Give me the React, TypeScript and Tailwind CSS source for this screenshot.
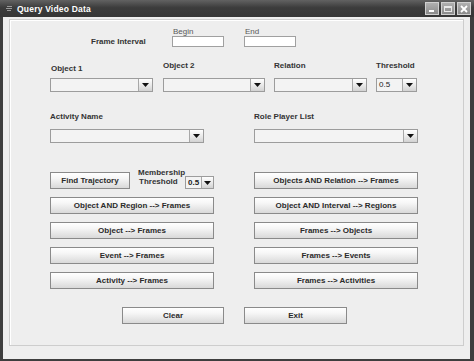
import React from "react";

function Arrow() {
  return (
    <div className="w-[14px] h-full border-l border-[#a8a8a8] bg-[linear-gradient(to_bottom,#ffffff,#e6e6e6_60%,#d2d2d2)] flex items-center justify-center">
      <svg width="7" height="4" viewBox="0 0 7 4">
        <path d="M0 0 H7 L3.5 4 Z" fill="#111" />
      </svg>
    </div>
  );
}

function Combo({ w, value, bold }: { w: string; value?: string; bold?: boolean }) {
  return (
    <div className={`${w} h-[14px] flex border border-[#9c9c9c] bg-[#f3f3f3] shrink-0`}>
      <div className={`flex-1 flex items-center pl-[2px] text-[8px] leading-[8px] text-[#222] ${bold ? "font-bold" : ""}`}>
        {value}
      </div>
      <Arrow />
    </div>
  );
}

function Btn({ w, children }: { w: string; children: React.ReactNode }) {
  return (
    <div
      className={`${w} h-[17px] shrink-0 border border-[#8a8a8a] bg-[linear-gradient(to_bottom,#ffffff,#f6f6f6_35%,#d9d9d9)] flex items-center justify-center text-[8px] leading-[8px] font-bold text-[#2a2a2a]`}
    >
      {children}
    </div>
  );
}

function Label({ children, className = "" }: { children: React.ReactNode; className?: string }) {
  return <div className={`text-[8px] leading-[10px] font-bold text-[#333] whitespace-nowrap ${className}`}>{children}</div>;
}

export default function App() {
  return (
    <div className="w-[474px] h-[361px] bg-[#3e3e3e] flex flex-col overflow-hidden font-['Liberation_Sans',Arial,sans-serif]">
      {/* title bar */}
      <div className="h-[17px] shrink-0 flex items-center bg-[linear-gradient(to_bottom,#626262,#3c3c3c_45%,#363636)]">
        <div className="w-[17px] flex flex-col items-center justify-center gap-[1px] pl-[1px]">
          <div className="w-[5px] h-[1px] bg-[#9a9a9a]" />
          <div className="w-[6px] h-[1px] bg-[#9a9a9a]" />
          <div className="w-[4px] h-[1px] bg-[#9a9a9a]" />
        </div>
        <div className="text-white font-bold text-[8.5px] leading-[10px] tracking-[0.2px]">Query Video Data</div>
        <div className="ml-auto flex gap-[2px] pr-[3px]">
          <div className="w-[14px] h-[13px] border border-[#cfcfcf] bg-[linear-gradient(to_bottom,#b0b0b0,#8a8a8a)] relative">
            <div className="absolute left-[3px] bottom-[2px] w-[5px] h-[2px] bg-white" />
          </div>
          <div className="w-[14px] h-[13px] border border-[#cfcfcf] bg-[linear-gradient(to_bottom,#b0b0b0,#8a8a8a)] flex items-center justify-center">
            <div className="w-[8px] h-[6px] border border-[#e8e8e8] border-t-2" />
          </div>
          <div className="w-[14px] h-[13px] border border-[#cfcfcf] bg-[linear-gradient(to_bottom,#b0b0b0,#8a8a8a)] flex items-center justify-center">
            <svg width="8" height="8" viewBox="0 0 8 8">
              <path d="M1 1 L7 7 M7 1 L1 7" stroke="white" strokeWidth="1.8" />
            </svg>
          </div>
        </div>
      </div>

      {/* body */}
      <div className="ml-[3px] mr-[4px] h-[342px] bg-[#eeeeee] pt-[2px] px-[6px] pb-[13px] flex">
        <div className="flex-1 border border-[#cdcdcd] shadow-[inset_1px_1px_0_#ffffff] flex flex-col">
          {/* frame interval */}
          <div className="flex items-end mt-[8px] h-[19px]">
            <Label className="ml-[81px] w-[81px]">Frame Interval</Label>
            <div className="w-[72px] flex flex-col">
              <div className="text-[8px] leading-[8px] text-[#5a5a5a] pl-[1px]">Begin</div>
              <div className="w-[52px] h-[11px] bg-white border border-[#a0a0a0]" />
            </div>
            <div className="flex flex-col">
              <div className="text-[8px] leading-[8px] text-[#5a5a5a] pl-[1px]">End</div>
              <div className="w-[52px] h-[11px] bg-white border border-[#a0a0a0]" />
            </div>
          </div>

          {/* objects row */}
          <div className="flex mt-[14px] ml-[40px]">
            <div className="w-[113px] flex flex-col">
              <div className="h-[17px] pt-[3px]"><Label className="pl-[1px]">Object 1</Label></div>
              <Combo w="w-[103px]" />
            </div>
            <div className="w-[111px] flex flex-col">
              <div className="h-[17px]"><Label>Object 2</Label></div>
              <Combo w="w-[102px]" />
            </div>
            <div className="w-[102px] flex flex-col">
              <div className="h-[17px]"><Label>Relation</Label></div>
              <Combo w="w-[93px]" />
            </div>
            <div className="flex flex-col">
              <div className="h-[17px]"><Label>Threshold</Label></div>
              <Combo w="w-[41px]" value="0.5" />
            </div>
          </div>

          {/* activity row */}
          <div className="flex mt-[20px] ml-[40px]">
            <div className="w-[204px] flex flex-col">
              <div className="h-[17px]"><Label>Activity Name</Label></div>
              <Combo w="w-[154px]" />
            </div>
            <div className="flex flex-col">
              <div className="h-[17px]"><Label>Role Player List</Label></div>
              <Combo w="w-[164px]" />
            </div>
          </div>

          {/* buttons */}
          <div className="flex mt-[29px] ml-[40px] gap-[40px]">
            <div className="w-[164px] flex flex-col gap-[8px]">
              <div className="h-[17px] flex relative">
                <Btn w="w-[80px]">Find Trajectory</Btn>
                <div className="ml-[8px] -mt-[4px] flex flex-col">
                  <div className="text-[8px] leading-[9px] font-bold text-[#333]">Membership</div>
                  <div className="text-[8px] leading-[9px] font-bold text-[#333] pl-[1px]">Threshold</div>
                </div>
                <div className="absolute left-[135px] top-[4px]">
                  <div className="w-[29px] h-[13px] flex border border-[#9c9c9c] bg-[#f3f3f3]">
                    <div className="flex-1 flex items-center pl-[2px] text-[8px] leading-[8px] font-bold text-[#222]">0.5</div>
                    <div className="w-[12px] h-full border-l border-[#a8a8a8] bg-[linear-gradient(to_bottom,#ffffff,#e6e6e6_60%,#d2d2d2)] flex items-center justify-center">
                      <svg width="7" height="4" viewBox="0 0 7 4">
                        <path d="M0 0 H7 L3.5 4 Z" fill="#111" />
                      </svg>
                    </div>
                  </div>
                </div>
              </div>
              <Btn w="w-[164px]">Object AND Region --&gt; Frames</Btn>
              <Btn w="w-[164px]">Object --&gt; Frames</Btn>
              <Btn w="w-[164px]">Event --&gt; Frames</Btn>
              <Btn w="w-[164px]">Activity --&gt; Frames</Btn>
            </div>
            <div className="w-[164px] flex flex-col gap-[8px]">
              <Btn w="w-[164px]">Objects AND Relation --&gt; Frames</Btn>
              <Btn w="w-[164px]">Object AND Interval --&gt; Regions</Btn>
              <Btn w="w-[164px]">Frames --&gt; Objects</Btn>
              <Btn w="w-[164px]">Frames --&gt; Events</Btn>
              <Btn w="w-[164px]">Frames --&gt; Activities</Btn>
            </div>
          </div>

          {/* clear / exit */}
          <div className="flex mt-[18px] ml-[112px] gap-[20px]">
            <Btn w="w-[102px]">Clear</Btn>
            <Btn w="w-[103px]">Exit</Btn>
          </div>
        </div>
      </div>
    </div>
  );
}
